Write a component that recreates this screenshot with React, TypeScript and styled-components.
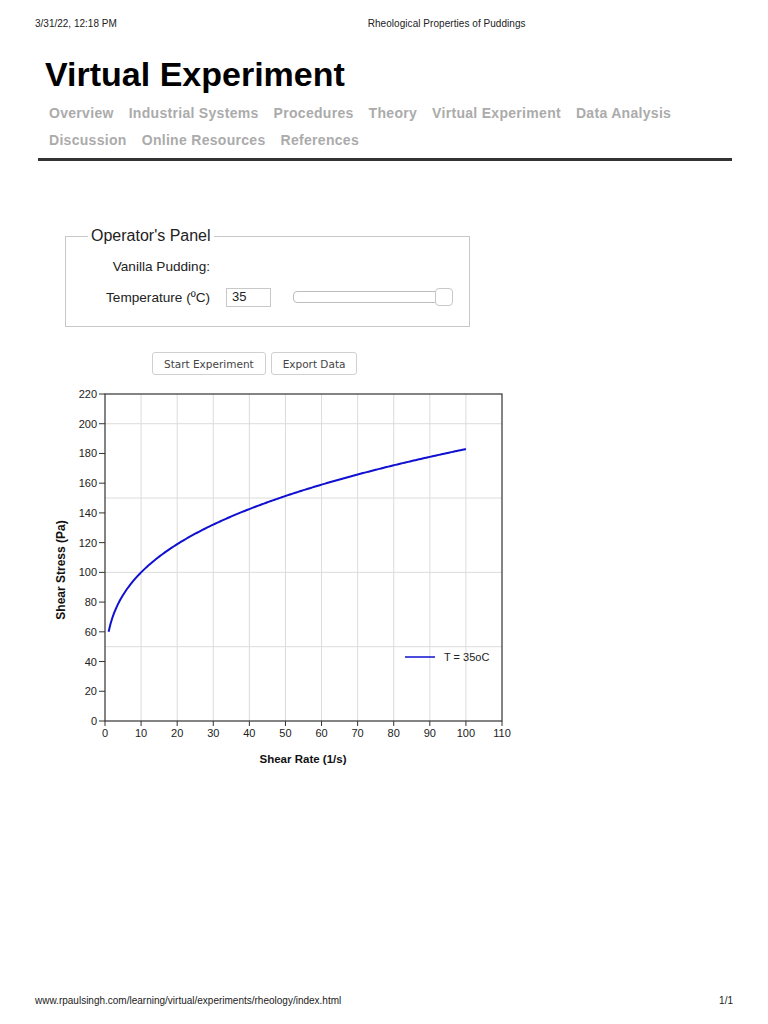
import React from "react";
import styled, { createGlobalStyle } from "styled-components";

const GlobalStyle = createGlobalStyle`
  html, body {
    margin: 0;
    padding: 0;
    background: #ffffff;
  }
  body {
    font-family: "Liberation Sans", Arial, sans-serif;
    color: #222;
  }
`;

const Page = styled.div`
  width: 768px;
  min-height: 1024px;
  display: flex;
  flex-direction: column;
  box-sizing: border-box;
`;

const PrintBar = styled.div<{ $top?: boolean }>`
  display: flex;
  align-items: center;
  padding: 0 35px;
  height: 14px;
  font-size: 10px;
  color: #222;
  margin-top: ${(p) => (p.$top ? "16px" : "0")};
`;

const PrintTitle = styled.span`
  margin-left: 251px;
  letter-spacing: 0.05px;
`;

const PrintPageNum = styled.span`
  margin-left: auto;
`;

const Content = styled.div`
  margin: 0 36px 0 38px;
`;

const Title = styled.h1`
  margin: 24px 0 0 7px;
  font-size: 34px;
  line-height: 40px;
  font-weight: bold;
  color: #000;
`;

const Nav = styled.nav`
  display: flex;
  flex-wrap: wrap;
  column-gap: 15px;
  padding: 6px 0 0 11px;
  width: 640px;
`;

const NavLink = styled.a`
  font-size: 14px;
  line-height: 27px;
  font-weight: bold;
  letter-spacing: 0.3px;
  color: #ababab;
  text-decoration: none;
`;

const Rule = styled.div`
  height: 3px;
  background: #333;
  margin-top: 4px;
`;

const Panel = styled.fieldset`
  margin: 66px 0 0 27px;
  width: 403px;
  height: 100px;
  box-sizing: border-box;
  border: 1px solid #c8c8c8;
  padding: 6px 0 0 0;
  display: grid;
  grid-template-columns: 144px 45px 182px;
  grid-template-rows: 30px 32px;
  column-gap: 16px;
  align-items: center;
  align-content: start;
`;

const PanelLegend = styled.legend`
  margin-left: 22px;
  padding: 0 3px;
  font-size: 16px;
  color: #222;
`;

const FieldLabel = styled.span`
  font-size: 13.6px;
  color: #222;
  text-align: right;
`;

const NumberBox = styled.div`
  height: 19px;
  border: 1px solid #c8c8c8;
  box-sizing: border-box;
  font-size: 13px;
  line-height: 16px;
  padding-left: 5px;
`;

const Track = styled.div`
  position: relative;
  width: 160px;
  height: 12px;
  margin-left: 6px;
  border: 1px solid #bdbdbd;
  border-radius: 4px 0 0 4px;
  box-sizing: border-box;
  background: #fff;
`;

const Thumb = styled.div`
  position: absolute;
  right: -1px;
  top: -4px;
  width: 18px;
  height: 18px;
  box-sizing: border-box;
  border: 1px solid #c8c8c8;
  border-radius: 4px;
  background: #fff;
`;

const Buttons = styled.div`
  display: flex;
  gap: 5px;
  margin: 25px 0 0 114px;
`;

const Button = styled.button`
  height: 23px;
  padding: 0 11px;
  font-family: "DejaVu Sans", Verdana, sans-serif;
  font-size: 10.5px;
  color: #444;
  background: #fff;
  border: 1px solid #d0d0d0;
  border-radius: 3px;
`;

const ChartWrap = styled.div`
  margin: 5px 0 0 2px;
`;

const Footer = styled(PrintBar)`
  margin-top: auto;
  margin-bottom: 17px;
`;

const X0 = 65;
const X1 = 462;
const Y0 = 341;
const YT = 14;
const sx = (v: number) => X0 + ((X1 - X0) * v) / 110;
const sy = (v: number) => Y0 - ((Y0 - YT) * v) / 220;

const stress = (r: number) => 22.8 + 37.2 * Math.pow(r, 0.317);

const curve = (() => {
  const pts: string[] = [];
  for (let r = 1; r <= 100; r += 0.5) {
    pts.push(`${sx(r).toFixed(2)},${sy(stress(r)).toFixed(2)}`);
  }
  return pts.join(" ");
})();

const xTicks = Array.from({ length: 12 }, (_, i) => i * 10);
const yTicks = Array.from({ length: 12 }, (_, i) => i * 20);
const hGrid = [50, 100, 150, 200];

const Chart = () => (
  <svg width="480" height="400" viewBox="0 0 480 400" fontFamily="Liberation Sans, Arial, sans-serif">
    {xTicks.slice(1, 11).map((t) => (
      <line key={`vg${t}`} x1={sx(t)} x2={sx(t)} y1={YT} y2={Y0} stroke="#dcdcdc" />
    ))}
    {hGrid.map((t) => (
      <line key={`hg${t}`} x1={X0} x2={X1} y1={sy(t)} y2={sy(t)} stroke="#dcdcdc" />
    ))}
    <rect x={X0} y={YT} width={X1 - X0} height={Y0 - YT} fill="none" stroke="#333" strokeWidth="1.2" />
    {yTicks.map((t) => (
      <g key={`y${t}`}>
        <line x1={X0 - 6} x2={X0} y1={sy(t)} y2={sy(t)} stroke="#333" />
        <text x={X0 - 8} y={sy(t) + 4} fontSize="11" textAnchor="end" fill="#222">
          {t}
        </text>
      </g>
    ))}
    {xTicks.map((t) => (
      <g key={`x${t}`}>
        <line x1={sx(t)} x2={sx(t)} y1={Y0} y2={Y0 + 5} stroke="#333" />
        <text x={sx(t)} y={Y0 + 16} fontSize="11" textAnchor="middle" fill="#222">
          {t}
        </text>
      </g>
    ))}
    <polyline points={curve} fill="none" stroke="#1010d0" strokeWidth="2" />
    <line x1="365" x2="395" y1="277" y2="277" stroke="#1010d0" strokeWidth="1.5" />
    <text x="404" y="281" fontSize="11" fill="#222">
      T = 35oC
    </text>
    <text
      x="0"
      y="0"
      fontSize="12"
      fontWeight="bold"
      textAnchor="middle"
      fill="#111"
      transform="translate(25 190) rotate(-90)"
    >
      Shear Stress (Pa)
    </text>
    <text x="263" y="383" fontSize="11.5" fontWeight="bold" textAnchor="middle" fill="#111">
      Shear Rate (1/s)
    </text>
  </svg>
);

const navItems = [
  "Overview",
  "Industrial Systems",
  "Procedures",
  "Theory",
  "Virtual Experiment",
  "Data Analysis",
  "Discussion",
  "Online Resources",
  "References",
];

export default function App() {
  return (
    <Page>
      <GlobalStyle />
      <PrintBar $top>
        <span>3/31/22, 12:18 PM</span>
        <PrintTitle>Rheological Properties of Puddings</PrintTitle>
      </PrintBar>
      <Content>
        <Title>Virtual Experiment</Title>
        <Nav>
          {navItems.map((n) => (
            <NavLink key={n} href="#">
              {n}
            </NavLink>
          ))}
        </Nav>
        <Rule />
        <Panel>
          <PanelLegend>Operator's Panel</PanelLegend>
          <FieldLabel>Vanilla Pudding:</FieldLabel>
          <span />
          <span />
          <FieldLabel>Temperature (ºC)</FieldLabel>
          <NumberBox>35</NumberBox>
          <Track>
            <Thumb />
          </Track>
        </Panel>
        <Buttons>
          <Button>Start Experiment</Button>
          <Button>Export Data</Button>
        </Buttons>
        <ChartWrap>
          <Chart />
        </ChartWrap>
      </Content>
      <Footer>
        <span>www.rpaulsingh.com/learning/virtual/experiments/rheology/index.html</span>
        <PrintPageNum>1/1</PrintPageNum>
      </Footer>
    </Page>
  );
}
